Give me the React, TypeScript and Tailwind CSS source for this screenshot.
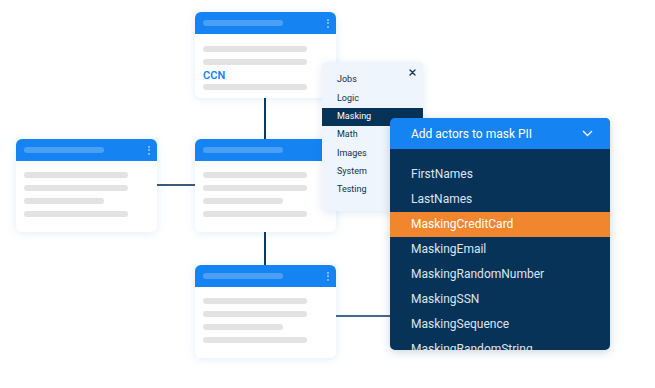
import React from "react";

const FONT = { fontFamily: "Roboto, 'Liberation Sans', sans-serif" };

function Dots() {
  return (
    <div className="flex flex-col gap-[1.5px]">
      <span className="h-[2px] w-[2px] rounded-full bg-[#9ccaf9]" />
      <span className="h-[2px] w-[2px] rounded-full bg-[#9ccaf9]" />
      <span className="h-[2px] w-[2px] rounded-full bg-[#9ccaf9]" />
    </div>
  );
}

function Bar({ short }: { short?: boolean }) {
  return <div className={`h-[6px] rounded-full bg-[#e3e3e3] ${short ? "w-[80px]" : "w-[104px]"}`} />;
}

function Card({ className, children }: { className: string; children: React.ReactNode }) {
  return (
    <div
      className={`absolute w-[141px] overflow-hidden rounded-[6px] bg-white shadow-[0_1px_10px_rgba(21,110,220,0.13)] ${className}`}
    >
      <div className="flex h-[22px] items-center justify-between bg-[#1583f2] pl-2 pr-[7px]">
        <div className="h-[6px] w-[80px] rounded-full bg-[#4ba0f6]" />
        <Dots />
      </div>
      {children}
    </div>
  );
}

function PlainBody() {
  return (
    <div className="flex h-[71px] flex-col gap-[7px] px-2 pt-[11px]">
      <Bar />
      <Bar />
      <Bar short />
      <Bar />
    </div>
  );
}

const menu = ["Jobs", "Logic", "Masking", "Math", "Images", "System", "Testing"];
const actors = [
  "FirstNames",
  "LastNames",
  "MaskingCreditCard",
  "MaskingEmail",
  "MaskingRandomNumber",
  "MaskingSSN",
  "MaskingSequence",
  "MaskingRandomString",
];

export default function App() {
  return (
    <div className="relative h-[388px] w-[655px] overflow-hidden bg-white" style={FONT}>
      {/* connectors */}
      <div className="absolute left-[264px] top-[96px] h-[45px] w-[2px] bg-[#0c3a62]" />
      <div className="absolute left-[264px] top-[230px] h-[37px] w-[2px] bg-[#0c3a62]" />
      <div className="absolute left-[155px] top-[184px] h-[2px] w-[42px] bg-[#3d5a7b]" />
      <div className="absolute left-[334px] top-[315px] h-[2px] w-[58px] bg-[#4a6788]" />

      <Card className="left-[195px] top-[12px]">
        <div className="flex h-[64px] flex-col px-2 pt-[12px]">
          <Bar />
          <div className="mt-[7px]">
            <Bar />
          </div>
          <div className="mt-[4px] text-[11px] font-semibold leading-[14px] text-[#1583f2]">CCN</div>
          <div className="mt-[1px]">
            <Bar />
          </div>
        </div>
      </Card>

      <Card className="left-[16px] top-[139px]">
        <PlainBody />
      </Card>
      <Card className="left-[195px] top-[139px]">
        <PlainBody />
      </Card>
      <Card className="left-[195px] top-[265px]">
        <PlainBody />
      </Card>

      {/* category menu */}
      <div className="absolute left-[322px] top-[62px] h-[149px] w-[101px] rounded-[4px] bg-[#eef5fd] pt-[9px] shadow-[0_2px_10px_rgba(21,80,160,0.12)]">
        <svg className="absolute right-[7px] top-[7px]" width="7" height="7" viewBox="0 0 7 7">
          <path d="M1 1L6 6M6 1L1 6" stroke="#123a5e" strokeWidth="1.4" strokeLinecap="round" />
        </svg>
        {menu.map((m) => (
          <div
            key={m}
            className={`flex h-[18.33px] items-center pl-[15px] text-[9px] ${
              m === "Masking" ? "bg-[#073358] text-white" : "text-[#14304d]"
            }`}
          >
            {m}
          </div>
        ))}
      </div>

      {/* actor dropdown */}
      <div className="absolute left-[390px] top-[118px] h-[232px] w-[220px] overflow-hidden rounded-[5px] bg-[#073358] shadow-[0_2px_10px_rgba(7,40,80,0.2)]">
        <div className="flex h-[31px] items-center justify-between bg-[#1583f2] pl-[21px] pr-[17px]">
          <span className="text-[12px] text-white">Add actors to mask PII</span>
          <svg width="11" height="7" viewBox="0 0 11 7">
            <path d="M1 1L5.5 5.5L10 1" fill="none" stroke="white" strokeWidth="1.3" />
          </svg>
        </div>
        <div className="pt-[12.5px]">
          {actors.map((a) => (
            <div
              key={a}
              className={`flex h-[25px] items-center pl-[21px] text-[12px] ${
                a === "MaskingCreditCard" ? "bg-[#f2862e] text-white" : "text-[#dde5ee]"
              }`}
            >
              {a}
            </div>
          ))}
        </div>
      </div>
    </div>
  );
}
